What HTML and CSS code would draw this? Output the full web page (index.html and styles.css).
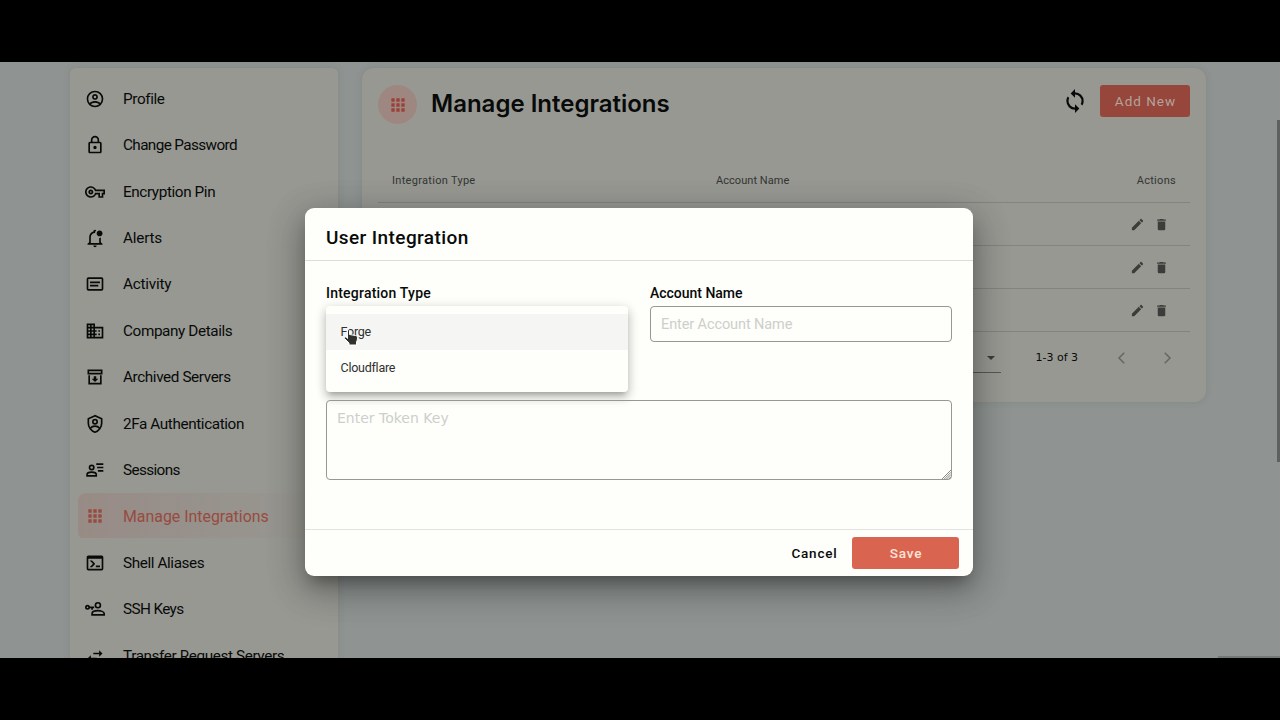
FILE: index.html
```html
<!DOCTYPE html>
<html lang="en">
<head>
<meta charset="utf-8">
<title>Manage Integrations</title>
<link rel="stylesheet" href="styles.css">
</head>
<body>
<svg class="sprite" width="0" height="0">
  <symbol id="apps" viewBox="0 0 24 24"><path d="M4 4h4v4H4zM10 4h4v4h-4zM16 4h4v4h-4zM4 10h4v4H4zM10 10h4v4h-4zM16 10h4v4h-4zM4 16h4v4H4zM10 16h4v4h-4zM16 16h4v4h-4z"/></symbol>
  <symbol id="pencil" viewBox="0 0 24 24"><path d="M20.71,7.04C21.1,6.65 21.1,6 20.71,5.63L18.37,3.29C18,2.9 17.35,2.9 16.96,3.29L15.12,5.12L18.87,8.87M3,17.25V21H6.75L17.81,9.93L14.06,6.18L3,17.25Z"/></symbol>
  <symbol id="trash" viewBox="0 0 24 24"><path d="M19,4H15.5L14.5,3H9.5L8.5,4H5V6H19M6,19A2,2 0 0,0 8,21H16A2,2 0 0,0 18,19V7H6V19Z"/></symbol>
</svg>
<div class="screen">
  <div class="page">
    <nav class="sidebar">
      <a class="item"><svg class="ico" viewBox="0 0 24 24"><path d="M12,2A10,10 0 0,0 2,12A10,10 0 0,0 12,22A10,10 0 0,0 22,12A10,10 0 0,0 12,2M7.07,18.28C7.5,17.38 10.12,16.5 12,16.5C13.88,16.5 16.5,17.38 16.93,18.28C15.57,19.36 13.86,20 12,20C10.14,20 8.43,19.36 7.07,18.28M18.36,16.83C16.93,15.09 13.46,14.5 12,14.5C10.54,14.5 7.07,15.09 5.64,16.83C4.62,15.5 4,13.82 4,12C4,7.59 7.59,4 12,4C16.41,4 20,7.59 20,12C20,13.82 19.38,15.5 18.36,16.83M12,6C10.06,6 8.5,7.56 8.5,9.5C8.5,11.44 10.06,13 12,13C13.94,13 15.5,11.44 15.5,9.5C15.5,7.56 13.94,6 12,6M12,11A1.5,1.5 0 0,1 10.5,9.5A1.5,1.5 0 0,1 12,8A1.5,1.5 0 0,1 13.5,9.5A1.5,1.5 0 0,1 12,11Z"/></svg><span>Profile</span></a>
      <a class="item tight"><svg class="ico" viewBox="0 0 24 24"><path d="M12,17C10.89,17 10,16.1 10,15C10,13.89 10.89,13 12,13A2,2 0 0,1 14,15A2,2 0 0,1 12,17M18,20V10H6V20H18M18,8A2,2 0 0,1 20,10V20A2,2 0 0,1 18,22H6C4.89,22 4,21.1 4,20V10C4,8.89 4.89,8 6,8H7V6A5,5 0 0,1 12,1A5,5 0 0,1 17,6V8H18M12,3A3,3 0 0,0 9,6V8H15V6A3,3 0 0,0 12,3Z"/></svg><span>Change Password</span></a>
      <a class="item"><svg class="ico" viewBox="0 0 24 24"><path d="M22 19h-6v-4h-2.68c-1.14 2.42-3.6 4-6.32 4-3.86 0-7-3.14-7-7s3.14-7 7-7c2.72 0 5.17 1.58 6.32 4H24v6h-2v4zm-4-2h2v-4h2v-2H11.94l-.23-.67C11.01 8.34 9.11 7 7 7c-2.76 0-5 2.24-5 5s2.24 5 5 5c2.11 0 4.01-1.34 4.71-3.33l.23-.67H18v4zM7 15c-1.65 0-3-1.35-3-3s1.35-3 3-3 3 1.35 3 3-1.35 3-3 3zm0-4c-.55 0-1 .45-1 1s.45 1 1 1 1-.45 1-1-.45-1-1-1z"/></svg><span>Encryption Pin</span></a>
      <a class="item wide"><svg class="ico" viewBox="0 0 24 24"><path d="M19 17V11.8C18.5 11.9 18 12 17.5 12H17V18H7V11C7 8.2 9.2 6 12 6C12.1 4.7 12.7 3.6 13.5 2.7C13.2 2.3 12.6 2 12 2C10.9 2 10 2.9 10 4V4.3C7 5.2 5 7.9 5 11V17L3 19V20H21V19L19 17M10 21C10 22.1 10.9 23 12 23S14 22.1 14 21H10M21 6.5C21 8.4 19.4 10 17.5 10S14 8.4 14 6.5 15.6 3 17.5 3 21 4.6 21 6.5"/></svg><span>Alerts</span></a>
      <a class="item wide"><svg class="ico" viewBox="0 0 24 24"><path d="M20,20H4A2,2 0 0,1 2,18V6A2,2 0 0,1 4,4H20A2,2 0 0,1 22,6V18A2,2 0 0,1 20,20M4,6V18H20V6H4M6,9H18V11H6V9M6,13H16V15H6V13Z"/></svg><span>Activity</span></a>
      <a class="item"><svg class="ico" viewBox="0 0 24 24"><path d="M18,15H16V17H18M18,11H16V13H18M20,19H12V17H14V15H12V13H14V11H12V9H20M10,7H8V5H10M10,11H8V9H10M10,15H8V13H10M10,19H8V17H10M6,7H4V5H6M6,11H4V9H6M6,15H4V13H6M6,19H4V17H6M12,7V3H2V21H22V7H12Z"/></svg><span>Company Details</span></a>
      <a class="item"><svg class="ico" viewBox="0 0 24 24"><path d="M20 21H4V10H6V19H18V10H20V21M3 3H21V9H3V3M5 5V7H19V5M10.5 11V14H8L12 18L16 14H13.5V11"/></svg><span>Archived Servers</span></a>
      <a class="item"><svg class="ico line" viewBox="0 0 24 24"><path d="M12 2.1L4 5.7V11c0 5 3.4 9.6 8 10.9 4.600-1.300 8-5.900 8-10.900V5.700z"/><circle cx="12" cy="9.300" r="2.600"/><path d="M6.500 17c1.500-2 3.500-2.500 5.500-2.500s4 .5 5.500 2.500"/></svg><span>2Fa Authentication</span></a>
      <a class="item tight"><svg class="ico line" viewBox="0 0 24 24"><circle cx="8" cy="9" r="2.600"/><path d="M2.500 19v-1.500c0-2 3-3 5.500-3s5.500 1 5.500 3V19zM13.500 5H22M14.500 9H22M15.500 13H22"/></svg><span>Sessions</span></a>
      <a class="item active"><svg class="ico"><use href="#apps"/></svg><span>Manage Integrations</span></a>
      <a class="item"><svg class="ico" viewBox="0 0 24 24"><path d="M20,19V7H4V19H20M20,3A2,2 0 0,1 22,5V19A2,2 0 0,1 20,21H4A2,2 0 0,1 2,19V5C2,3.890 2.900,3 4,3H20M13,17V15H18V17H13M9.580,13L5.570,9H8.400L11.700,12.300C12.090,12.690 12.090,13.330 11.700,13.720L8.420,17H5.590L9.580,13Z"/></svg><span>Shell Aliases</span></a>
      <a class="item tight"><svg class="ico line" viewBox="0 0 24 24"><circle cx="15.500" cy="7.500" r="3"/><path d="M8.500 19v-1.500c0-2.300 3.800-3.500 7-3.500s7.500 1.200 7.500 3.500V19z"/><circle cx="3" cy="10" r="2"/><path d="M5 10h6M8.500 10v3"/></svg><span>SSH Keys</span></a>
      <a class="item"><svg class="ico" viewBox="0 0 24 24"><path d="M21,9L17,5V8H10V10H17V13M7,11L3,15L7,19V16H14V14H7V11Z"/></svg><span>Transfer Request Servers</span></a>
    </nav>
    <main class="card">
      <header class="card-head">
        <span class="badge"><svg><use href="#apps"/></svg></span>
        <h1>Manage Integrations</h1>
        <svg class="sync" viewBox="0 0 24 24"><path d="M12,18A6,6 0 0,1 6,12C6,11 6.250,10.030 6.700,9.200L5.240,7.740C4.460,8.970 4,10.430 4,12A8,8 0 0,0 12,20V23L16,19L12,15M12,4V1L8,5L12,9V6A6,6 0 0,1 18,12C18,13 17.750,13.970 17.300,14.800L18.760,16.260C19.540,15.030 20,13.570 20,12A8,8 0 0,0 12,4Z"/></svg>
        <button class="add">Add New</button>
      </header>
      <div class="row thead"><span>Integration Type</span><span class="acct">Account Name</span><span>Actions</span></div>
      <div class="row"><svg><use href="#pencil"/></svg><svg><use href="#trash"/></svg></div>
      <div class="row"><svg><use href="#pencil"/></svg><svg><use href="#trash"/></svg></div>
      <div class="row"><svg><use href="#pencil"/></svg><svg><use href="#trash"/></svg></div>
      <footer class="pager">
        <span class="size"><i></i></span>
        <span class="range">1-3 of 3</span>
        <svg viewBox="0 0 24 24"><path d="M15 5l-7 7 7 7"/></svg>
        <svg viewBox="0 0 24 24"><path d="M9 5l7 7-7 7"/></svg>
      </footer>
    </main>
  </div>
  <div class="scrollbar"></div>
  <div class="toast"></div>
  <div class="overlay">
    <section class="modal">
      <h2>User Integration</h2>
      <div class="body">
        <div class="fields">
          <div class="field">
            <label>Integration Type</label>
            <div class="select">
              <div class="menu"><div class="opt hover">Forge</div><div class="opt">Cloudflare</div></div>
              <svg class="cursor" viewBox="0 0 16 18"><path d="M4.500 1.500c1-.8 2 0 2 .9V6l6 1c1.500.3 2 1 2 2.200 0 2-.4 3-1 4.300V16.500H6v-2L1.500 10c-.5-1.200.8-2 1.700-1.300L4.500 10z"/></svg>
            </div>
          </div>
          <div class="field">
            <label class="acct">Account Name</label>
            <div class="input">Enter Account Name</div>
          </div>
        </div>
        <div class="area">Enter Token Key<svg viewBox="0 0 10 10"><path d="M0 10L10 0M2.500 10L10 2.500M5 10l5-5M7.500 10L10 7.500"/></svg></div>
      </div>
      <footer class="foot"><span class="cancel">Cancel</span><button class="save">Save</button></footer>
    </section>
  </div>
</div>
</body>
</html>
```
FILE: styles.css
```css
* { box-sizing: border-box; }
body { margin: 0; padding: 62px 0; height: 720px; background: #000; overflow: hidden; font-family: Roboto, "Noto Sans", sans-serif; color: #080a09; }
button { border: 0; font-family: inherit; }
svg { display: block; fill: currentColor; flex: none; }
.sprite { position: absolute; }
.screen { position: relative; height: 596px; overflow: hidden; background: #8f9492; }
.page { display: flex; align-items: flex-start; gap: 24px; padding: 6px 0 0 70px; }

.sidebar { width: 268px; height: 620px; flex: none; padding: 7.500px 8px; background: #979892; box-shadow: 0 0 7px rgba(60,66,66,.14); border-radius: 6px 6px 0 0; }
.item { display: flex; align-items: center; gap: 18px; height: 46.420px; padding: 0 7px; font-size: 15.300px; letter-spacing: -.4px; white-space: nowrap; }
.item.tight { letter-spacing: -.62px; }
.item.wide { letter-spacing: -.22px; }
.ico { width: 20px; height: 20px; }
.line, .pager svg { fill: none; stroke: currentColor; stroke-width: 2; }
.item.active { color: #974b40; background: linear-gradient(90deg, #988b86, #97938d 60%, #979892); background-size: 100% 45px; background-repeat: no-repeat; border-radius: 8px; letter-spacing: 0; font-size: 15.900px; }

.card { width: 844px; height: 334px; padding: 17px 16px 0; background: #979892; border-radius: 12px; box-shadow: 0 0 7px rgba(60,66,66,.14); }
.card-head { display: flex; align-items: flex-start; height: 74px; }
.badge { display: flex; align-items: center; justify-content: center; width: 39px; height: 39px; border-radius: 50%; background: #9e8781; color: #9b4238; }
.badge svg { width: 20px; height: 20px; }
h1 { flex: 1; margin: 5px 0 0 14px; font: 600 24px/28px Inter, sans-serif; letter-spacing: 0; }
.sync { width: 26px; height: 26px; margin: 3px 12px 0 0; }
.add { width: 90px; height: 32px; padding: 0 0 0 1px; border-radius: 3px; background: #96463b; color: #b3a49c; font-size: 13.500px; letter-spacing: 1px; }
.row { display: flex; align-items: center; justify-content: flex-end; gap: 9px; height: 43px; padding-right: 21px; border-bottom: 1px solid #82847f; color: #3c3d3a; }
.row svg { width: 15px; height: 15px; }
.row.thead { display: grid; grid-template-columns: 324px 1fr auto; gap: 0; height: 44px; padding: 0 14px; font-size: 11px; color: #333633; letter-spacing: .3px; }
.thead .acct { letter-spacing: .05px; }
.pager { display: flex; align-items: center; height: 51px; justify-content: flex-end; padding-right: 14px; }
.size { display: flex; align-items: center; justify-content: flex-end; width: 60px; height: 41px; padding: 11px 6px 0 0; margin-right: 34px; align-self: flex-start; border-bottom: 1px solid #555854; }
.size i { border: 4.500px solid transparent; border-top: 4.500px solid #3b3d3a; border-bottom: 0; }
.range { font: 11px "DejaVu Sans", sans-serif; margin-right: 35px; }
.pager svg { width: 18px; height: 18px; color: #646763; }
.pager svg + svg { margin-left: 27px; }

.scrollbar { position: absolute; right: 0; top: 58px; width: 3px; height: 342px; background: #5d615f; }
.toast { position: absolute; right: 0; bottom: 0; width: 62px; height: 2px; background: #747876; }
.overlay { position: absolute; inset: 0; padding: 146px 0 0 305px; }
.modal { width: 668px; height: 368px; border-radius: 9px; background: #fefefb; box-shadow: 0 11px 15px -7px rgba(0,0,0,.3), 0 12px 34px 3px rgba(0,0,0,.25), 0 9px 36px 6px rgba(0,0,0,.1); }
h2 { margin: 0; height: 53px; padding: 0 21px; border-bottom: 1px solid #dcdddb; font: 500 19px/59px Roboto, sans-serif; letter-spacing: .4px; }
.body { height: 268px; padding: 23px 21px 0; }
.fields { display: flex; gap: 22px; height: 116px; }
.field { flex: 1; }
label { display: block; height: 22px; font-size: 14px; line-height: 19px; font-weight: 500; letter-spacing: .22px; }
label.acct { letter-spacing: -.02px; }
.select { position: relative; }
.menu { height: 86px; padding: 8px 0; border-radius: 4px; background: #fefefb; box-shadow: 0 5px 5px -3px rgba(0,0,0,.2), 0 6px 10px 1px rgba(0,0,0,.14), 0 2px 12px 1px rgba(0,0,0,.12); }
.opt { height: 36px; padding: 0 14.500px; font-size: 12.500px; letter-spacing: -.25px; line-height: 36px; color: #30312f; }
.opt.hover { background: #f5f5f3; }
.cursor { position: absolute; left: 17px; top: 22px; width: 16px; height: 19px; fill: #30302e; stroke: #fff; stroke-width: 1; }
.input, .area { border: 1px solid #969894; border-radius: 4px; padding: 0 10px; color: #cdcfcb; }
.input { height: 36px; line-height: 36px; font-size: 14.500px; letter-spacing: -.1px; }
.area { position: relative; height: 80px; font: 14px/35px "DejaVu Sans", sans-serif; }
.area svg { position: absolute; right: 0; bottom: 0; width: 9px; height: 9px; stroke: #777975; }
.foot { display: flex; align-items: center; justify-content: flex-end; gap: 14.500px; height: 47px; border-top: 1px solid #e3e4e1; padding-right: 14px; font-size: 13.500px; font-weight: 500; }
.cancel { letter-spacing: .8px; }
.save { width: 107px; height: 32px; padding: 0 0 0 1px; border-radius: 3px; background: #d96551; color: #ffe4d8; font-size: 13.500px; font-weight: 500; letter-spacing: .8px; }
```
